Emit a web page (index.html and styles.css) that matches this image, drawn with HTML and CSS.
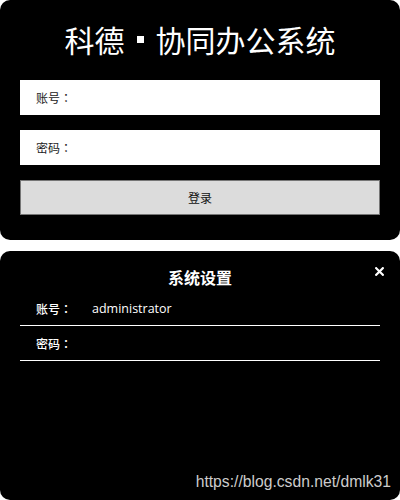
FILE: index.html
```html
<!DOCTYPE html>
<html lang="zh-CN">
<head>
<meta charset="utf-8">
<title>科德·协同办公系统</title>
<link rel="stylesheet" href="styles.css">
</head>
<body>
<div class="page">
  <section class="card login">
    <h1 class="title">科德<span class="dot"></span>协同办公系统</h1>
    <div class="field"><span class="field-label">账号<span class="colon" lang="zh-TW">：</span></span></div>
    <div class="field"><span class="field-label">密码<span class="colon" lang="zh-TW">：</span></span></div>
    <button class="btn" type="button">登录</button>
  </section>
  <section class="card settings">
    <h2 class="settings-title">系统设置</h2>
    <svg class="close" width="9" height="9" viewBox="0 0 9 9"><path d="M1.2 1.2L7.8 7.8M7.8 1.2L1.2 7.8" stroke="#fff" stroke-width="2.2" stroke-linecap="square"/></svg>
    <div class="row"><span class="row-label">账号<span class="colon" lang="zh-TW">：</span></span><span class="row-value">administrator</span></div>
    <div class="row"><span class="row-label">密码<span class="colon" lang="zh-TW">：</span></span><span class="row-value"></span></div>
    <div class="watermark">https://blog.csdn.net/dmlk31</div>
  </section>
</div>
</body>
</html>
```
FILE: styles.css
```css
html, body {
  margin: 0;
  padding: 0;
  background: #fff;
}
body {
  font-family: "Noto Sans CJK SC", "Noto Sans", sans-serif;
}
.page {
  width: 400px;
  display: flex;
  flex-direction: column;
  gap: 11px;
}
.card {
  background: #000;
  border-radius: 10px;
  box-sizing: border-box;
  position: relative;
}
.login {
  height: 240px;
  padding: 0 20px;
  display: flex;
  flex-direction: column;
}
.title {
  margin: 0;
  height: 80px;
  display: flex;
  align-items: center;
  justify-content: center;
  color: #fff;
  font-size: 30px;
  font-weight: normal;
  padding-bottom: 2px;
  box-sizing: border-box;
}
.dot {
  display: inline-block;
  width: 7px;
  height: 7px;
  background: #fff;
  margin: 0 12px;
}
.colon {
  font-family: "Noto Sans CJK TC", "Noto Sans CJK SC", sans-serif;
}
.field {
  height: 35px;
  background: #fff;
  margin-bottom: 15px;
  display: flex;
  align-items: center;
  padding-left: 16px;
}
.field-label {
  font-size: 12px;
  color: #222;
}
.btn {
  height: 35px;
  width: 100%;
  background: #dcdcdc;
  border: 1px solid #767676;
  font-family: "Noto Sans CJK SC", sans-serif;
  font-size: 12px;
  color: #111;
  padding: 0;
  margin: 0;
}
.settings {
  height: 249px;
  padding: 0 20px;
}
.settings-title {
  margin: 0;
  height: 40px;
  padding-top: 12px;
  line-height: 28px;
  box-sizing: border-box;
  text-align: center;
  color: #fff;
  font-size: 16px;
  font-weight: bold;
}
.close {
  position: absolute;
  top: 16px;
  right: 16px;
}
.row {
  display: flex;
  align-items: center;
  height: 34px;
  padding: 0 16px;
  border-bottom: 1px solid #fff;
  color: #fff;
  font-size: 12px;
}
.row-label {
  width: 56px;
  font-weight: 500;
}
.row-value {
  font-family: "Open Sans", "Noto Sans", sans-serif;
  font-size: 12.5px;
}
.watermark {
  position: absolute;
  right: 9px;
  bottom: 9px;
  color: #ccc;
  font-family: "Liberation Sans", Arial, sans-serif;
  font-size: 15.7px;
}
```
